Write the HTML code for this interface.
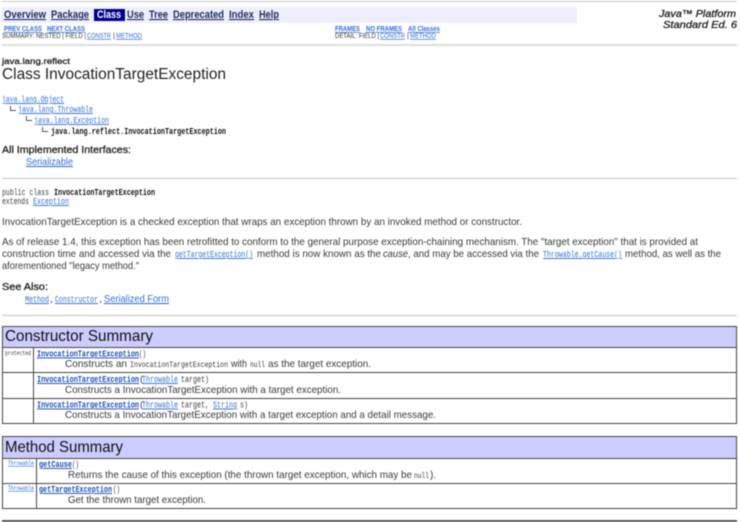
<!DOCTYPE html>
<html>
<head>
<meta charset="utf-8">
<style>
html,body{margin:0;padding:0;background:#fff;width:740px;height:522px;overflow:hidden}
svg{display:block;filter:blur(0.45px)}
text{font-family:"Liberation Sans",sans-serif;fill:#3a3a3a;white-space:pre}
.m{font-family:"Liberation Mono",monospace}
.l{fill:#2f6fd6;text-decoration:underline}
.n{font-weight:bold;font-size:11px;fill:#1c2a5a;text-decoration:underline}
.s{font-size:7px}
.sl{font-size:7px;font-weight:bold;fill:#2f6fd6;text-decoration:underline}
.b{font-size:10.5px}
.c{font-size:9.5px}
.h{font-size:16px;fill:#111}
.t{stroke:#222;stroke-width:.3px;fill:#222}
</style>
</head>
<body>
<svg width="740" height="522" viewBox="0 0 740 522" xmlns="http://www.w3.org/2000/svg">
<rect x="1" y="1" width="736" height="1" fill="#c8c8c8"/>
<rect x="1" y="7" width="576" height="16" fill="#eeeeff"/>
<rect x="94" y="9" width="31" height="12" fill="#00008b"/>
<text class="n" x="4" y="18" textLength="42" lengthAdjust="spacingAndGlyphs">Overview</text>
<text class="n" x="51" y="18" textLength="38" lengthAdjust="spacingAndGlyphs">Package</text>
<text x="97" y="18" font-size="11" font-weight="bold" style="fill:#fff" textLength="24" lengthAdjust="spacingAndGlyphs">Class</text>
<text class="n" x="127" y="18" textLength="17" lengthAdjust="spacingAndGlyphs">Use</text>
<text class="n" x="149" y="18" textLength="19" lengthAdjust="spacingAndGlyphs">Tree</text>
<text class="n" x="173" y="18" textLength="51" lengthAdjust="spacingAndGlyphs">Deprecated</text>
<text class="n" x="229" y="18" textLength="25" lengthAdjust="spacingAndGlyphs">Index</text>
<text class="n" x="259" y="18" textLength="20" lengthAdjust="spacingAndGlyphs">Help</text>

<text class="sl" x="4" y="31" textLength="38" lengthAdjust="spacingAndGlyphs">PREV CLASS</text>
<text class="sl" x="47" y="31" textLength="38" lengthAdjust="spacingAndGlyphs">NEXT CLASS</text>
<text class="sl" x="335" y="31" textLength="25" lengthAdjust="spacingAndGlyphs">FRAMES</text>
<text class="sl" x="366" y="31" textLength="36" lengthAdjust="spacingAndGlyphs">NO FRAMES</text>
<text class="sl" x="408" y="31" textLength="32" lengthAdjust="spacingAndGlyphs">All Classes</text>

<text class="s" x="2" y="38" textLength="84" lengthAdjust="spacingAndGlyphs">SUMMARY: NESTED | FIELD |</text>
<text class="s l" x="87" y="38" textLength="24" lengthAdjust="spacingAndGlyphs">CONSTR</text>
<text class="s" x="113" y="38">|</text>
<text class="s l" x="116" y="38" textLength="26" lengthAdjust="spacingAndGlyphs">METHOD</text>
<text class="s" x="335" y="38" textLength="44" lengthAdjust="spacingAndGlyphs">DETAIL: FIELD |</text>
<text class="s l" x="380" y="38" textLength="25" lengthAdjust="spacingAndGlyphs">CONSTR</text>
<text class="s" x="407" y="38">|</text>
<text class="s l" x="410" y="38" textLength="26" lengthAdjust="spacingAndGlyphs">METHOD</text>

<text class="t" x="659" y="17" font-size="10" font-style="italic" textLength="77" lengthAdjust="spacingAndGlyphs">Java™ Platform</text>
<text class="t" x="663" y="28" font-size="10" font-style="italic" textLength="74" lengthAdjust="spacingAndGlyphs">Standard Ed. 6</text>
<rect x="1" y="44" width="736" height="2" fill="#dcdcdc"/>

<text class="t" x="2" y="64" font-size="8.5" textLength="68" lengthAdjust="spacingAndGlyphs">java.lang.reflect</text>
<text x="2" y="79" font-size="15.5" style="fill:#222" textLength="224" lengthAdjust="spacingAndGlyphs">Class InvocationTargetException</text>

<text class="m l c" x="2" y="102" textLength="62" lengthAdjust="spacingAndGlyphs">java.lang.Object</text>
<path d="M10.5 106V110.5H16M26.5 116V120.5H32M42.5 127V131.5H48" fill="none" stroke="#555" stroke-width="1"/>
<text class="m l c" x="18" y="112" textLength="75" lengthAdjust="spacingAndGlyphs">java.lang.Throwable</text>
<text class="m l c" x="34" y="123" textLength="75" lengthAdjust="spacingAndGlyphs">java.lang.Exception</text>
<text class="m c" x="51" y="134" font-weight="bold" style="fill:#111" textLength="175" lengthAdjust="spacingAndGlyphs">java.lang.reflect.InvocationTargetException</text>

<text class="t" x="2" y="153" font-size="10.5" textLength="129" lengthAdjust="spacingAndGlyphs">All Implemented Interfaces:</text>
<text class="l b" x="26" y="165" textLength="47" lengthAdjust="spacingAndGlyphs">Serializable</text>
<rect x="2" y="178" width="735" height="1" fill="#c4c4c4"/>

<text class="m c" x="2" y="195" textLength="47" lengthAdjust="spacingAndGlyphs">public class</text>
<text class="m c" x="54" y="195" font-weight="bold" style="fill:#111" textLength="101" lengthAdjust="spacingAndGlyphs">InvocationTargetException</text>
<text class="m c" x="2" y="204" textLength="27" lengthAdjust="spacingAndGlyphs">extends</text>
<text class="m c l" x="33" y="204" textLength="36" lengthAdjust="spacingAndGlyphs">Exception</text>

<text class="b" x="2" y="225" textLength="520" lengthAdjust="spacingAndGlyphs">InvocationTargetException is a checked exception that wraps an exception thrown by an invoked method or constructor.</text>
<text class="b" x="2" y="245" textLength="696" lengthAdjust="spacingAndGlyphs">As of release 1.4, this exception has been retrofitted to conform to the general purpose exception-chaining mechanism. The "target exception" that is provided at</text>
<text class="b" x="2" y="257" textLength="169" lengthAdjust="spacingAndGlyphs">construction time and accessed via the</text>
<text class="m l c" x="175" y="257" textLength="78" lengthAdjust="spacingAndGlyphs">getTargetException()</text>
<text class="b" x="257" y="257" textLength="124" lengthAdjust="spacingAndGlyphs">method is now known as the</text>
<text class="b" x="383" y="257" font-style="italic" textLength="25" lengthAdjust="spacingAndGlyphs">cause</text>
<text class="b" x="408" y="257" textLength="131" lengthAdjust="spacingAndGlyphs">, and may be accessed via the</text>
<text class="m l c" x="543" y="257" textLength="79" lengthAdjust="spacingAndGlyphs">Throwable.getCause()</text>
<text class="b" x="625" y="257" textLength="96" lengthAdjust="spacingAndGlyphs">method, as well as the</text>
<text class="b" x="2" y="269" textLength="137" lengthAdjust="spacingAndGlyphs">aforementioned "legacy method."</text>

<text class="t" x="2" y="290" font-size="10.5" textLength="46" lengthAdjust="spacingAndGlyphs">See Also:</text>
<text class="m l c" x="25" y="302" textLength="24" lengthAdjust="spacingAndGlyphs">Method</text>
<text class="b" x="50" y="302">,</text>
<text class="m l c" x="55" y="302" textLength="43" lengthAdjust="spacingAndGlyphs">Constructor</text>
<text class="b" x="99" y="302">,</text>
<text class="l b" x="104" y="302" textLength="65" lengthAdjust="spacingAndGlyphs">Serialized Form</text>
<rect x="2" y="315" width="735" height="1" fill="#c4c4c4"/>

<!-- Constructor Summary -->
<rect x="3" y="327" width="733" height="20" fill="#ccccff"/>
<g fill="#444">
<rect x="2" y="326" width="735" height="1"/>
<rect x="2" y="326" width="1" height="98"/>
<rect x="736" y="326" width="1" height="98"/>
<rect x="2" y="347" width="735" height="1"/>
<rect x="2" y="372" width="735" height="1"/>
<rect x="2" y="398" width="735" height="1"/>
<rect x="2" y="423" width="735" height="1"/>
<rect x="33" y="347" width="1" height="77"/>
</g>
<text class="h" x="5" y="341" textLength="148" lengthAdjust="spacingAndGlyphs">Constructor Summary</text>

<text class="m" x="5" y="355" font-size="6" textLength="26" lengthAdjust="spacingAndGlyphs">protected</text>
<text class="m l c" x="37" y="356.5" font-weight="bold" textLength="102" lengthAdjust="spacingAndGlyphs" style="fill:#1a50b8">InvocationTargetException</text>
<text class="m c" x="139" y="356.5" textLength="7" lengthAdjust="spacingAndGlyphs">()</text>
<text class="b" x="65" y="367" textLength="62" lengthAdjust="spacingAndGlyphs">Constructs an</text>
<text class="m" x="130" y="367" font-size="8" textLength="98" lengthAdjust="spacingAndGlyphs">InvocationTargetException</text>
<text class="b" x="231" y="367" textLength="16" lengthAdjust="spacingAndGlyphs">with</text>
<text class="m" x="250" y="367" font-size="8" textLength="15" lengthAdjust="spacingAndGlyphs">null</text>
<text class="b" x="268" y="367" textLength="103" lengthAdjust="spacingAndGlyphs">as the target exception.</text>

<text class="m l c" x="37" y="382" font-weight="bold" textLength="102" lengthAdjust="spacingAndGlyphs" style="fill:#1a50b8">InvocationTargetException</text>
<text class="m c" x="139" y="382">(</text>
<text class="m l c" x="142" y="382" textLength="36" lengthAdjust="spacingAndGlyphs">Throwable</text>
<text class="m c" x="181" y="382" textLength="28" lengthAdjust="spacingAndGlyphs">target)</text>
<text class="b" x="65" y="393" textLength="276" lengthAdjust="spacingAndGlyphs">Constructs a InvocationTargetException with a target exception.</text>

<text class="m l c" x="37" y="407.5" font-weight="bold" textLength="102" lengthAdjust="spacingAndGlyphs" style="fill:#1a50b8">InvocationTargetException</text>
<text class="m c" x="139" y="407.5">(</text>
<text class="m l c" x="142" y="407.5" textLength="36" lengthAdjust="spacingAndGlyphs">Throwable</text>
<text class="m c" x="181" y="407.5" textLength="28" lengthAdjust="spacingAndGlyphs">target,</text>
<text class="m l c" x="213" y="407.5" textLength="24" lengthAdjust="spacingAndGlyphs">String</text>
<text class="m c" x="240" y="407.5" textLength="8" lengthAdjust="spacingAndGlyphs">s)</text>
<text class="b" x="65" y="418" textLength="371" lengthAdjust="spacingAndGlyphs">Constructs a InvocationTargetException with a target exception and a detail message.</text>

<!-- Method Summary -->
<rect x="3" y="437" width="733" height="21" fill="#ccccff"/>
<g fill="#444">
<rect x="2" y="436" width="735" height="1"/>
<rect x="2" y="436" width="1" height="73"/>
<rect x="736" y="436" width="1" height="73"/>
<rect x="2" y="458" width="735" height="1"/>
<rect x="2" y="483" width="735" height="1"/>
<rect x="2" y="508" width="735" height="1"/>
<rect x="36" y="458" width="1" height="51"/>
</g>
<text class="h" x="5" y="452" textLength="118" lengthAdjust="spacingAndGlyphs">Method Summary</text>

<text class="m l" x="8" y="465" font-size="6" textLength="26" lengthAdjust="spacingAndGlyphs">Throwable</text>
<text class="m l c" x="39" y="467" font-weight="bold" textLength="33" lengthAdjust="spacingAndGlyphs" style="fill:#1a50b8">getCause</text>
<text class="m c" x="72" y="467" textLength="7" lengthAdjust="spacingAndGlyphs">()</text>
<text class="b" x="68" y="478" textLength="344" lengthAdjust="spacingAndGlyphs">Returns the cause of this exception (the thrown target exception, which may be</text>
<text class="m" x="414" y="478" font-size="8" textLength="15" lengthAdjust="spacingAndGlyphs">null</text>
<text class="b" x="430" y="478" textLength="6" lengthAdjust="spacingAndGlyphs">).</text>

<text class="m l" x="8" y="490" font-size="6" textLength="26" lengthAdjust="spacingAndGlyphs">Throwable</text>
<text class="m l c" x="39" y="492" font-weight="bold" textLength="73" lengthAdjust="spacingAndGlyphs" style="fill:#1a50b8">getTargetException</text>
<text class="m c" x="113" y="492" textLength="7" lengthAdjust="spacingAndGlyphs">()</text>
<text class="b" x="68" y="503" textLength="138" lengthAdjust="spacingAndGlyphs">Get the thrown target exception.</text>

<rect x="2" y="520" width="735" height="2" fill="#555"/>
</svg>
</body>
</html>
